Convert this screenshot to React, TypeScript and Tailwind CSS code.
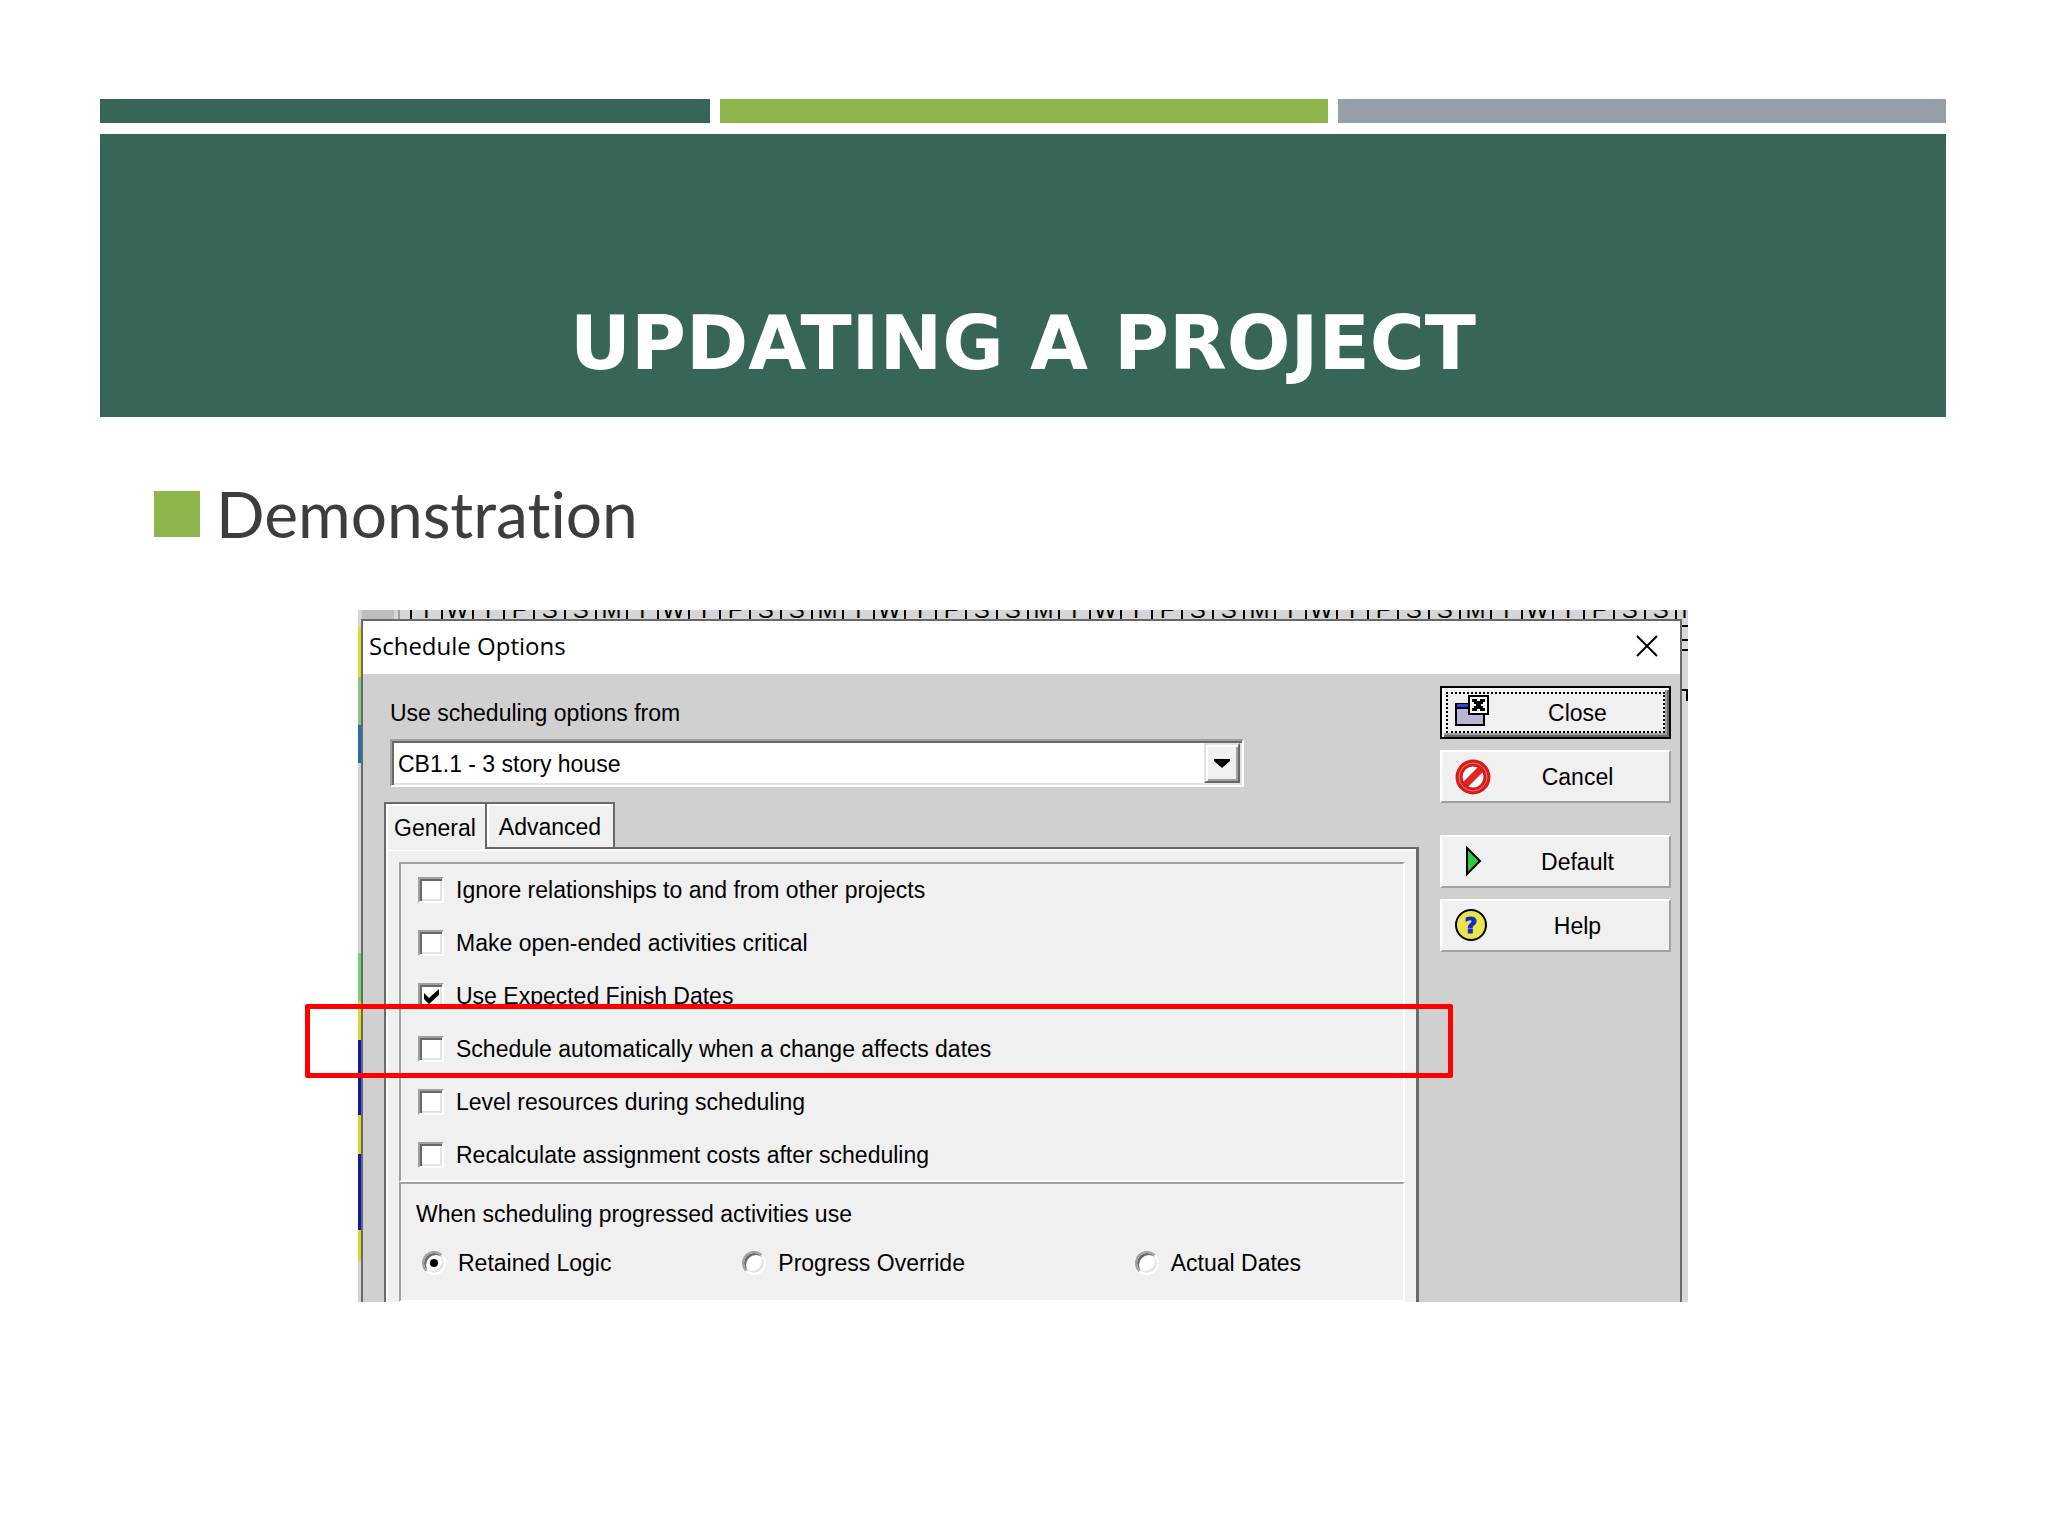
import type { ReactNode } from "react";

const WEEK = ["T", "W", "T", "F", "S", "S", "M"];
const WEEKS = [1, 2, 3, 4, 5, 6];

// Slivers of the Gantt rows visible along the left edge of the dialog
const ROW_COLORS = [
  "h-[8px] bg-[#d8d8d8]",
  "h-[50px] bg-[#e0dc28]",
  "h-[48px] bg-[#7ccb7c]",
  "h-[38px] bg-[#1c6fb8]",
  "h-[190px] bg-[#d4d4d4]",
  "h-[48px] bg-[#6fd66f]",
  "h-[39px] bg-[#dcd820]",
  "h-[75px] bg-[#1414b4]",
  "h-[39px] bg-[#dcd820]",
  "h-[76px] bg-[#1414b4]",
  "h-[31px] bg-[#dcd820]",
];

const OPTIONS = [
  { label: "Ignore relationships to and from other projects", checked: false },
  { label: "Make open-ended activities critical", checked: false },
  { label: "Use Expected Finish Dates", checked: true },
  { label: "Schedule automatically when a change affects dates", checked: false },
  { label: "Level resources during scheduling", checked: false },
  { label: "Recalculate assignment costs after scheduling", checked: false },
];

const LOGIC = ["Retained Logic", "Progress Override", "Actual Dates"];

const SUNKEN =
  "appearance-none border-2 border-t-[#a0a0a0] border-l-[#a0a0a0] border-r-white border-b-white bg-white shadow-[inset_2px_2px_0_#696969,inset_-2px_-2px_0_#e3e3e3]";

const Checkbox = ({ label, checked }: { label: string; checked: boolean }) => (
  <label className="flex h-[26px] items-center gap-3">
    <span className="relative size-[26px] shrink-0">
      <input
        type="checkbox"
        defaultChecked={checked}
        className={`peer block size-[26px] ${SUNKEN}`}
      />
      <svg
        viewBox="0 0 26 26"
        className="pointer-events-none absolute inset-0 hidden size-[26px] peer-checked:block"
      >
        <path d="M6 10v6l5 5L21 12V6l-10 9z" fill="#000" />
      </svg>
    </span>
    {label}
  </label>
);

const Radio = ({ label, checked }: { label: string; checked: boolean }) => (
  <label className="flex h-[26px] items-center gap-3">
    <span className="relative size-6 shrink-0">
      <input
        type="radio"
        name="logic"
        defaultChecked={checked}
        className={`peer block size-6 rounded-full ${SUNKEN}`}
      />
      <span className="pointer-events-none absolute top-2 left-2 hidden size-2 rounded-full bg-black peer-checked:block" />
    </span>
    {label}
  </label>
);

const SideButton = ({
  label,
  icon,
  focused,
}: {
  label: string;
  icon: ReactNode;
  focused?: boolean;
}) => (
  <button
    type="button"
    className={
      focused
        ? "relative flex h-[53px] w-full items-center border-2 border-black bg-[#f0f0f0] px-[13px] shadow-[inset_2px_2px_0_#fff,inset_-2px_-2px_0_#696969,inset_-4px_-4px_0_#a0a0a0]"
        : "relative flex h-[53px] w-full items-center border-t-2 border-r-2 border-b-2 border-l-2 border-t-white border-r-[#a0a0a0] border-b-[#a0a0a0] border-l-white bg-[#f0f0f0] px-[13px]"
    }
  >
    <span className="flex w-9 shrink-0 justify-start">{icon}</span>
    <span className="flex-1 pl-2 text-center">{label}</span>
    {focused && (
      <span className="pointer-events-none absolute inset-1 border-2 border-dotted border-black" />
    )}
  </button>
);

const CloseIcon = () => (
  <svg width="34" height="36" viewBox="0 0 34 36" shapeRendering="crispEdges">
    <rect x="1" y="9" width="28" height="21" fill="#b8b4d4" stroke="#000" strokeWidth="2" />
    <rect x="2" y="9" width="12" height="3" fill="#2448d8" />
    <rect x="2" y="12" width="12" height="2" fill="#000" />
    <rect x="14" y="1" width="19" height="18" fill="#fff" stroke="#000" strokeWidth="2" />
    <path
      d="M17 4h5v2h3V4h5v3h-2v2h-2v2h2v2h2v3h-5v-2h-3v2h-5v-3h2v-2h2V9h-2V7h-2z"
      fill="#000"
    />
  </svg>
);

const CancelIcon = () => (
  <svg width="36" height="36" viewBox="0 0 36 36">
    <circle cx="18" cy="18" r="14" fill="#fff" />
    <path d="M8 28 28 8" stroke="#e02424" strokeWidth="7" />
    <circle cx="18" cy="18" r="14" fill="none" stroke="#d81c1c" strokeWidth="7" />
    <circle cx="18" cy="18" r="14" fill="none" stroke="#f08080" strokeWidth="1" />
  </svg>
);

const DefaultIcon = () => (
  <svg width="36" height="32" viewBox="0 0 36 32">
    <path d="M12 2v26l13-13z" fill="#2ecc3c" stroke="#000" strokeWidth="2" />
  </svg>
);

const HelpIcon = () => (
  <svg width="34" height="36" viewBox="0 0 34 36">
    <circle cx="16" cy="17" r="15" fill="#e8e64a" stroke="#000" strokeWidth="2" />
    <text
      x="16"
      y="25"
      textAnchor="middle"
      fill="#1428d0"
      stroke="#1428d0"
      strokeWidth="1"
      className="font-['DejaVu_Sans',sans-serif] text-[22px] font-bold"
    >
      ?
    </text>
  </svg>
);

const ScheduleDialog = () => (
  <div className="min-w-0 flex-1 border-2 border-b-0 border-[#696969] bg-[#d0d0d0] text-[23px] leading-7 text-black">
    {/* Title bar */}
    <div className="flex h-[53px] items-center justify-between bg-white pr-[22px] pb-1 pl-1.5">
      <h2 className="font-['Open_Sans',sans-serif] text-2xl">Schedule Options</h2>
      <button type="button" aria-label="Close dialog">
        <svg width="22" height="22" viewBox="0 0 22 22">
          <path d="M1 1l20 20M21 1L1 21" stroke="#000" strokeWidth="2" />
        </svg>
      </button>
    </div>

    <div className="flex gap-[21px] pr-[9px] pl-[21px]">
      <div className="min-w-0 flex-1 pt-[25px]">
        <div className="mr-[175px] ml-1.5">
          <label htmlFor="source">Use scheduling options from</label>
          <div className={`relative mt-3 h-[48px] ${SUNKEN}`}>
            <select
              id="source"
              className="h-full w-full appearance-none bg-transparent pt-[2px] pr-12 pl-1.5"
            >
              <option>CB1.1 - 3 story house</option>
            </select>
            <span className="pointer-events-none absolute top-[2px] right-[2px] bottom-[2px] flex w-9 items-center justify-center border-2 border-t-[#e3e3e3] border-r-[#696969] border-b-[#696969] border-l-[#e3e3e3] bg-[#f0f0f0] shadow-[inset_2px_2px_0_#fff,inset_-2px_-2px_0_#a0a0a0]">
              <svg width="16" height="9" viewBox="0 0 16 9">
                <path d="M0 0h16v2L8 9 0 2z" fill="#000" />
              </svg>
            </span>
          </div>
        </div>

        {/* Tabs */}
        <div role="tablist" className="mt-[15px] flex items-end">
          <button
            type="button"
            role="tab"
            aria-selected="true"
            className="relative z-10 -mb-[3px] h-[48px] border-t-2 border-l-2 border-[#696969] bg-[#f0f0f0] pt-[2px] pr-[9px] pl-2 shadow-[inset_2px_2px_0_#fff]"
          >
            General
          </button>
          <button
            type="button"
            role="tab"
            aria-selected="false"
            className="h-[45px] border-2 border-b-0 border-[#696969] bg-[#f0f0f0] px-[12px] pt-[2px] shadow-[inset_2px_2px_0_#fff]"
          >
            Advanced
          </button>
        </div>

        <div
          role="tabpanel"
          className="border-t-2 border-r-3 border-l-2 border-[#696969] bg-[#f0f0f0] pt-[13px] pr-[11px] pl-[13px] shadow-[inset_2px_2px_0_#fff]"
        >
          <div className="flex flex-col gap-[27px] border-t-2 border-r-2 border-b-2 border-l-2 border-t-[#a0a0a0] border-r-white border-b-white border-l-[#a0a0a0] pt-[13px] pb-3 pl-[17px]">
            {OPTIONS.map((option) => (
              <Checkbox key={option.label} {...option} />
            ))}
          </div>
          <fieldset className="border-t-2 border-r-2 border-b-2 border-l-2 border-t-[#a0a0a0] border-r-white border-b-white border-l-[#a0a0a0] pt-4 pb-6">
            <p className="pl-[15px]">When scheduling progressed activities use</p>
            <div className="mt-[22px] grid grid-cols-[320fr_392fr_268fr] pl-[21px]">
              {LOGIC.map((label, i) => (
                <Radio key={label} label={label} checked={i === 0} />
              ))}
            </div>
          </fieldset>
        </div>
      </div>

      {/* Side buttons */}
      <div className="flex w-[231px] shrink-0 flex-col pt-3">
        <div className="flex flex-col gap-[11px]">
          <SideButton label="Close" icon={<CloseIcon />} focused />
          <SideButton label="Cancel" icon={<CancelIcon />} />
        </div>
        <div className="mt-8 flex flex-col gap-[11px]">
          <SideButton label="Default" icon={<DefaultIcon />} />
          <SideButton label="Help" icon={<HelpIcon />} />
        </div>
      </div>
    </div>
  </div>
);

const App = () => (
  <main className="min-h-screen bg-white pt-[99px] pr-[102px] pb-20 pl-[100px] font-['Liberation_Sans',Arial,sans-serif]">
    {/* Accent bars */}
    <div className="grid grid-cols-[610fr_608fr_608fr] gap-[10px]">
      <div className="h-6 bg-[#376658]" />
      <div className="h-6 bg-[#8db54b]" />
      <div className="h-6 bg-[#969fa7]" />
    </div>

    <header className="mt-[11px] flex h-[283px] items-end justify-center bg-[#376658] pb-6">
      <h1 className="font-['DejaVu_Sans',sans-serif] text-[75px] leading-[100px] font-bold text-white">
        UPDATING A PROJECT
      </h1>
    </header>

    <ul className="mt-[57px] pl-[54px]">
      <li className="flex items-center gap-4 font-['Lato',sans-serif] text-[64px] leading-[80px] text-[#3d3d3d] [font-variant-ligatures:none]">
        <span className="size-[46px] bg-[#8db54b]" />
        Demonstration
      </li>
    </ul>

    <figure className="relative mx-auto mt-14 max-w-[1330px]">
      {/* Timescale header cut off by the dialog */}
      <div className="flex h-[9px] overflow-hidden bg-[#d6d6d6]">
        <div className="ml-1 w-8 shrink-0 bg-[#bebebe]" />
        <div className="ml-1 w-3 shrink-0 border-l-2 border-[#a0a0a0]" />
        <div className="flex min-w-0 flex-1 items-end overflow-hidden border-l-2 border-black text-2xl leading-[18px]">
          {WEEKS.map((week) => (
            <div key={week} className="flex w-[216px] shrink-0">
              {WEEK.map((day, i) => (
                <span key={i} className="flex-1 border-r-2 border-black text-center">
                  {day}
                </span>
              ))}
            </div>
          ))}
        </div>
      </div>

      <div className="flex">
        <div className="w-[3px] shrink-0 bg-[#d4d4d4]">
          {ROW_COLORS.map((row, i) => (
            <div key={i} className={row} />
          ))}
        </div>
        <ScheduleDialog />
        <div className="w-1.5 shrink-0 bg-[#d8d8d8] pt-1.5">
          <div className="h-[14px] border-t-2 border-black" />
          <div className="h-3 border-y-2 border-black" />
          <div className="mt-[38px] h-3 border-t-2 border-r-2 border-black" />
        </div>
      </div>

      {/* Highlighted option */}
      <div className="pointer-events-none absolute top-[394px] right-[235px] -left-[53px] h-[74px] rounded-xs border-5 border-[#ff0000]" />
    </figure>
  </main>
);

export default App;
